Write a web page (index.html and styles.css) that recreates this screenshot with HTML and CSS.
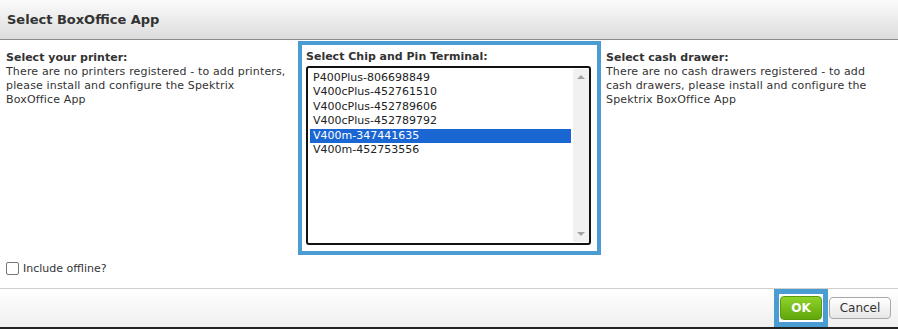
FILE: index.html
```html
<!DOCTYPE html>
<html>
<head>
<meta charset="utf-8">
<link rel="stylesheet" href="styles.css">
</head>
<body>
<div class="dialog">
  <div class="header"><span class="title">Select BoxOffice App</span></div>
  <div class="content">
    <div class="col col-left">
      <div class="label">Select your printer:</div>
      <div class="text">There are no printers registered - to add printers, please install and configure the Spektrix BoxOffice App</div>
    </div>
    <div class="col col-mid">
      <div class="label">Select Chip and Pin Terminal:</div>
      <div class="listbox">
        <div class="options">
          <div class="opt">P400Plus-806698849</div>
          <div class="opt">V400cPlus-452761510</div>
          <div class="opt">V400cPlus-452789606</div>
          <div class="opt">V400cPlus-452789792</div>
          <div class="opt sel">V400m-347441635</div>
          <div class="opt">V400m-452753556</div>
        </div>
        <div class="scrollbar">
          <span class="arrow up"></span>
          <span class="arrow down"></span>
        </div>
      </div>
    </div>
    <div class="col col-right">
      <div class="label">Select cash drawer:</div>
      <div class="text">There are no cash drawers registered - to add cash drawers, please install and configure the Spektrix BoxOffice App</div>
    </div>
  </div>
  <div class="offline"><span class="checkbox"></span><span>Include offline?</span></div>
  <div class="footer">
    <div class="ok-wrap"><button class="btn ok">OK</button></div>
    <button class="btn cancel">Cancel</button>
  </div>
</div>
</body>
</html>
```
FILE: styles.css
```css
html, body {
  margin: 0;
  padding: 0;
  background: #fff;
}
body {
  font-family: "DejaVu Sans", Verdana, sans-serif;
  font-size: 11px;
  color: #333;
}
.dialog {
  width: 898px;
  height: 329px;
  display: flex;
  flex-direction: column;
  overflow: hidden;
}
.header {
  height: 40px;
  flex: none;
  box-sizing: border-box;
  border-bottom: 1px solid #8c8c8c;
  background: linear-gradient(#fbfbfb, #dcdcdc);
  display: flex;
  align-items: center;
  padding-left: 7px;
  padding-bottom: 1px;
}
.title {
  font-weight: bold;
  font-size: 13px;
  color: #333;
}
.content {
  display: flex;
  height: 215px;
  flex: none;
  padding-top: 1px;
}
.col {
  box-sizing: border-box;
}
.col-left {
  width: 298px;
  padding: 10px 6px 0 6px;
}
.col-right {
  flex: 1;
  padding: 10px 20px 0 5px;
}
.col-mid {
  width: 303px;
  height: 214px;
  border: 4px solid #4a9cd2;
  padding: 5px 8px 6px 4px;
  display: flex;
  flex-direction: column;
}
.label {
  font-weight: bold;
  line-height: 14px;
  height: 14px;
  margin-bottom: 0;
}
.text {
  line-height: 14px;
  letter-spacing: 0.15px;
}
.col-mid .label {
  margin-bottom: 2px;
}
.listbox {
  flex: 1;
  border: 2px solid #111;
  border-radius: 3px;
  display: flex;
  width: 285px;
  box-sizing: border-box;
}
.options {
  flex: 1;
  padding: 3px 2px 0 2px;
}
.opt {
  height: 14.4px;
  line-height: 14.4px;
  padding-left: 3px;
  color: #222;
  white-space: nowrap;
}
.opt.sel {
  background: #1a66d2;
  color: #fff;
}
.scrollbar {
  width: 16px;
  background: #f1f1f1;
  display: flex;
  flex-direction: column;
  justify-content: space-between;
  align-items: center;
  padding: 6px 0;
  margin: 1px 0;
}
.arrow {
  width: 0;
  height: 0;
  border-left: 4px solid transparent;
  border-right: 4px solid transparent;
}
.arrow.up {
  border-bottom: 4px solid #a3a3a3;
}
.arrow.down {
  border-top: 4px solid #a3a3a3;
}
.offline {
  flex: 1;
  display: flex;
  align-items: center;
  padding-left: 6px;
  gap: 4px;
  padding-bottom: 8px;
}
.checkbox {
  width: 11px;
  height: 11px;
  border: 1px solid #767676;
  border-radius: 2px;
  background: #fff;
}
.footer {
  height: 41px;
  flex: none;
  box-sizing: border-box;
  border-top: 1px solid #cfcfcf;
  border-bottom: 2px solid #222;
  background: linear-gradient(#ffffff, #efefef);
  display: flex;
  align-items: center;
  justify-content: flex-end;
  padding-right: 7px;
  gap: 1px;
}
.ok-wrap {
  border: 5px solid #4a9cd2;
  padding: 1px;
  background: #fff;
  display: flex;
  box-sizing: border-box;
  height: 38px;
  width: 54px;
  align-items: center;
  justify-content: center;
}
.btn {
  font-family: inherit;
  font-size: 12px;
  border-radius: 4px;
  cursor: pointer;
}
.ok {
  width: 42px;
  height: 24px;
  border: 1px solid #5a9a0a;
  background: linear-gradient(#8fd32a, #5fa70b);
  color: #fff;
  font-weight: bold;
  padding: 0;
}
.cancel {
  width: 62px;
  height: 22px;
  border: 1px solid #a8a8a8;
  background: linear-gradient(#ffffff, #e6e6e6);
  color: #333;
  padding: 0;
}
```
